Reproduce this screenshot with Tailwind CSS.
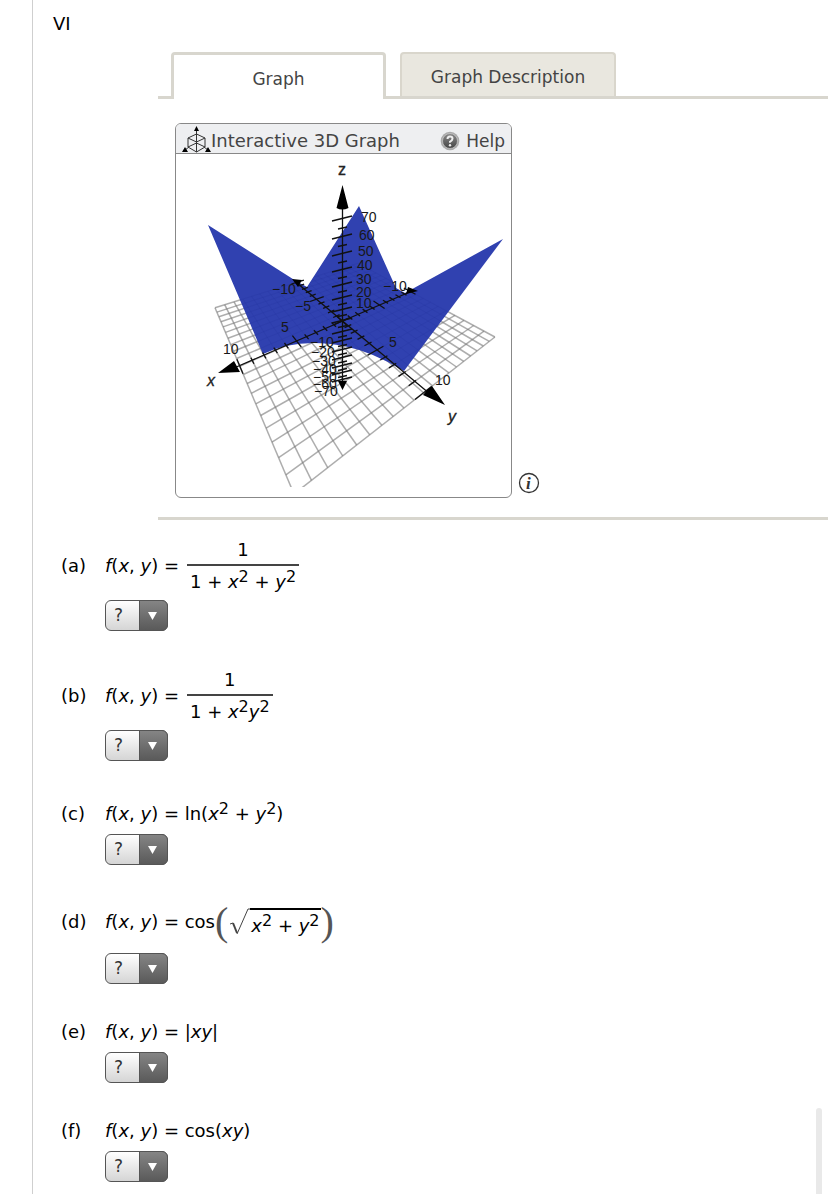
<!DOCTYPE html>
<html lang="en">
<head>
  <meta charset="UTF-8" />
  <meta name="viewport" content="width=device-width, initial-scale=1.0" />
  <title>Match the function with its graph</title>
  <script src="https://cdn.jsdelivr.net/npm/@tailwindcss/browser@4"></script>
</head>
<body class="bg-white font-['DejaVu_Sans',sans-serif] text-lg text-black overflow-x-hidden">

  <main class="ml-8 min-h-screen border-l border-[#cfcfcf] pt-3 pb-3">
    <h2 class="pl-5 h-6 leading-6">VI</h2>

    <!-- Graph tabs -->
    <section class="ml-[125px] mt-4 border-b-3 border-[#d8d6ce] pb-[19px]">
      <div role="tablist" class="flex items-end gap-3.5 border-b-3 border-[#d8d6ce] pl-[13px] text-[17px] text-[#444]">
        <button role="tab" aria-selected="true" class="-mb-[3px] h-[47px] w-[215px] rounded-t border-3 border-b-0 border-[#d8d6ce] bg-white pt-1">Graph</button>
        <button role="tab" aria-selected="false" class="h-11 w-[216px] rounded-t border-2 border-b-0 border-[#d9d6cc] bg-[#e9e7df] pt-1">Graph Description</button>
      </div>

      <div class="mt-6 ml-[17px] flex items-end gap-1.5">
        <div class="w-[337px] overflow-hidden rounded-md border border-[#888]">
          <div class="flex h-[30px] items-end justify-between border-b border-[#888] bg-[#eeeff1] pl-1.5 pr-1.5 text-[17px] text-[#444]">
            <div class="flex items-end">
              <svg class="h-7 w-[29px]" viewBox="0 0 29 28" fill="none" stroke="#333" stroke-width="1">
                <path d="M14.500 6v6M14.500 21v6M7 22l-4 3M22 22l4 3" />
                <path d="M6 13l8.500-4 8.500 4v9l-8.500 5L6 22zM6 13l8.500 4 8.500-4M14.500 17v10M14.500 9v9l-8.500 4M14.500 18l8.500 4" />
                <path d="M14.500 1l2.500 5h-5zM0 27l3-5 3 5zM23 27l3-5 3 5z" fill="#000" stroke="none" />
              </svg>
              <span class="text-lg leading-6">Interactive 3D Graph</span>
            </div>
            <button class="flex items-center gap-1.5 leading-6">
              <svg class="h-5 w-5" viewBox="0 0 20 20">
                <defs>
                  <linearGradient id="ball" x1="0" y1="0" x2="0" y2="1">
                    <stop offset="0" stop-color="#8a8a8a" /><stop offset="1" stop-color="#444" />
                  </linearGradient>
                </defs>
                <circle cx="10" cy="10" r="9.300" fill="#aaa" />
                <circle cx="10" cy="10" r="7.500" fill="url(#ball)" stroke="#ccc" stroke-width=".7" />
                <path d="M7.500 8q0-2.500 2.500-2.500t2.500 2.300q0 1.500-2.500 3v.9" fill="none" stroke="#eee" stroke-width="2" />
                <circle cx="10" cy="14.200" r="1.200" fill="#eee" />
              </svg>
              Help
            </button>
          </div>

          <!-- 3D plot -->
          <svg class="block h-[343px] w-full" viewBox="176 154 335 343" role="img" aria-label="Graph of the surface z = xy">
            <defs>
              <clipPath id="frame"><rect x="176" y="299" width="335" height="188" /></clipPath>
              <clipPath id="sheet">
                <path d="M208 225L296 281L307 287L359 206L396 288L405 293L503 239L404 371Q373 352 344 346Q298 337 263 354Z" />
              </clipPath>
            </defs>
            <g id="floor" clip-path="url(#frame)" fill="none" stroke="#777" stroke-opacity=".6" stroke-width="1.500"></g>
            <g clip-path="url(#sheet)">
              <rect x="200" y="200" width="310" height="180" fill="#3041b0" />
              <g id="mesh" fill="none" stroke="#24339a" stroke-opacity=".2" stroke-width="1"></g>
            </g>
            <g stroke="#111" stroke-width="1.300" fill="none">
              <path d="M234 368L412 291M297 283L430 394M342.500 205V385" />
              <g id="ticks"></g>
            </g>
            <path d="M342.500 185L348.500 208Q342 211 336.500 208ZM218 373L234 361L240 372ZM445 405L432 386Q426 390 423 395ZM342.500 390L338 381H347ZM418 291L408 287L406 294ZM292 279L302 280L298 287Z" fill="#000" />
            <g class="font-['Liberation_Sans',sans-serif] text-[14px]" fill="#181818" id="numbers">
              <text x="223" y="354">10</text>
              <text x="281" y="332">5</text>
              <text x="389" y="347">5</text>
              <text x="435" y="385">10</text>
              <text x="272" y="294">−10</text>
              <text x="295" y="311">−5</text>
              <text x="383" y="291">−10</text>
            </g>
            <g class="font-['Liberation_Sans',sans-serif] text-base" fill="#222" stroke="#222" stroke-width=".3">
              <text x="338" y="175">z</text>
              <text class="italic" x="207" y="386">x</text>
              <text class="italic" x="448" y="422">y</text>
            </g>
          </svg>
        </div>
        <button aria-label="Information" class="mb-1">
          <svg class="h-[22px] w-[22px]" viewBox="0 0 22 22">
            <circle cx="11" cy="11" r="9.500" fill="#fff" stroke="#333" stroke-width="1.300" />
            <text class="font-['Liberation_Serif',serif] text-[17px] font-bold italic" x="8" y="17" fill="#333">i</text>
          </svg>
        </button>
      </div>
    </section>

    <!-- Questions -->
    <ol class="ml-7 mt-[18px]">
      <li class="grid grid-cols-[44px_1fr]">
        <label for="qa" class="flex h-14 items-center">(a)</label>
        <div class="flex h-14 items-center gap-2">
          <span><i>f</i>(<i>x</i>, <i>y</i>) =</span>
          <span class="flex flex-col items-center">
            <span class="h-6 leading-5">1</span>
            <span class="h-7 border-t-2 border-[#444] px-[3px] leading-8">1 + <i>x</i><sup class="-top-1.5 text-base leading-none">2</sup> + <i>y</i><sup class="-top-1.5 text-base leading-none">2</sup></span>
          </span>
        </div>
        <div class="relative col-start-2 mt-1.5 h-[31px] w-[63px] text-[17px]">
          <select id="qa" class="h-full w-full appearance-none rounded-md border border-[#555] bg-linear-to-b from-white to-[#d5d5d5] pl-2 text-[#333]">
            <option>?</option><option>I</option><option>II</option><option>III</option><option>IV</option><option>V</option><option>VI</option>
          </select>
          <span class="pointer-events-none absolute inset-y-0 right-0 flex w-[29px] items-center justify-center rounded-r-md border border-[#555] bg-linear-to-b from-[#858585] to-[#5a5a5a] pr-0.5">
            <svg class="h-2 w-2.5" viewBox="0 0 10 8"><path d="M0 0h9L4.500 8z" fill="#fff" /></svg>
          </span>
        </div>
      </li>

      <li class="mt-[37px] grid grid-cols-[44px_1fr]">
        <label for="qb" class="flex h-14 items-center">(b)</label>
        <div class="flex h-14 items-center gap-2">
          <span><i>f</i>(<i>x</i>, <i>y</i>) =</span>
          <span class="flex flex-col items-center">
            <span class="h-6 leading-5">1</span>
            <span class="h-7 border-t-2 border-[#444] px-[3px] leading-8">1 + <i>x</i><sup class="-top-1.5 text-base leading-none">2</sup><i>y</i><sup class="-top-1.5 text-base leading-none">2</sup></span>
          </span>
        </div>
        <div class="relative col-start-2 mt-1.5 h-[31px] w-[63px] text-[17px]">
          <select id="qb" class="h-full w-full appearance-none rounded-md border border-[#555] bg-linear-to-b from-white to-[#d5d5d5] pl-2 text-[#333]">
            <option>?</option><option>I</option><option>II</option><option>III</option><option>IV</option><option>V</option><option>VI</option>
          </select>
          <span class="pointer-events-none absolute inset-y-0 right-0 flex w-[29px] items-center justify-center rounded-r-md border border-[#555] bg-linear-to-b from-[#858585] to-[#5a5a5a] pr-0.5">
            <svg class="h-2 w-2.5" viewBox="0 0 10 8"><path d="M0 0h9L4.500 8z" fill="#fff" /></svg>
          </span>
        </div>
      </li>

      <li class="mt-[39px] grid grid-cols-[44px_1fr]">
        <label for="qc" class="flex h-7 items-center">(c)</label>
        <div class="h-7 leading-7"><i>f</i>(<i>x</i>, <i>y</i>) = ln(<i>x</i><sup class="-top-1.5 text-base leading-none">2</sup> + <i>y</i><sup class="-top-1.5 text-base leading-none">2</sup>)</div>
        <div class="relative col-start-2 mt-1.5 h-[31px] w-[63px] text-[17px]">
          <select id="qc" class="h-full w-full appearance-none rounded-md border border-[#555] bg-linear-to-b from-white to-[#d5d5d5] pl-2 text-[#333]">
            <option>?</option><option>I</option><option>II</option><option>III</option><option>IV</option><option>V</option><option>VI</option>
          </select>
          <span class="pointer-events-none absolute inset-y-0 right-0 flex w-[29px] items-center justify-center rounded-r-md border border-[#555] bg-linear-to-b from-[#858585] to-[#5a5a5a] pr-0.5">
            <svg class="h-2 w-2.5" viewBox="0 0 10 8"><path d="M0 0h9L4.500 8z" fill="#fff" /></svg>
          </span>
        </div>
      </li>

      <li class="mt-8 grid grid-cols-[44px_1fr]">
        <label for="qd" class="flex h-[50px] items-center">(d)</label>
        <div class="flex h-[50px] items-center">
          <span><i>f</i>(<i>x</i>, <i>y</i>) = cos</span>
          <span class="font-['Liberation_Serif',serif] text-[40px] leading-10 text-[#555]">(</span>
          <svg class="h-7 w-[22px]" viewBox="0 0 22 28" fill="none" stroke="#444"><path d="M2 16l3-1" /><path d="M5 15l4 10" stroke-width="2" /><path d="M9 26L20 1h2" /></svg>
          <span class="h-7 border-t-2 border-black px-px leading-8"><i>x</i><sup class="-top-1.5 text-base leading-none">2</sup> + <i>y</i><sup class="-top-1.5 text-base leading-none">2</sup></span>
          <span class="font-['Liberation_Serif',serif] text-[40px] leading-10 text-[#555]">)</span>
        </div>
        <div class="relative col-start-2 mt-1.5 h-[31px] w-[63px] text-[17px]">
          <select id="qd" class="h-full w-full appearance-none rounded-md border border-[#555] bg-linear-to-b from-white to-[#d5d5d5] pl-2 text-[#333]">
            <option>?</option><option>I</option><option>II</option><option>III</option><option>IV</option><option>V</option><option>VI</option>
          </select>
          <span class="pointer-events-none absolute inset-y-0 right-0 flex w-[29px] items-center justify-center rounded-r-md border border-[#555] bg-linear-to-b from-[#858585] to-[#5a5a5a] pr-0.5">
            <svg class="h-2 w-2.5" viewBox="0 0 10 8"><path d="M0 0h9L4.500 8z" fill="#fff" /></svg>
          </span>
        </div>
      </li>

      <li class="mt-[34px] grid grid-cols-[44px_1fr]">
        <label for="qe" class="flex h-7 items-center">(e)</label>
        <div class="h-7 leading-7"><i>f</i>(<i>x</i>, <i>y</i>) = |<i>xy</i>|</div>
        <div class="relative col-start-2 mt-1.5 h-[31px] w-[63px] text-[17px]">
          <select id="qe" class="h-full w-full appearance-none rounded-md border border-[#555] bg-linear-to-b from-white to-[#d5d5d5] pl-2 text-[#333]">
            <option>?</option><option>I</option><option>II</option><option>III</option><option>IV</option><option>V</option><option>VI</option>
          </select>
          <span class="pointer-events-none absolute inset-y-0 right-0 flex w-[29px] items-center justify-center rounded-r-md border border-[#555] bg-linear-to-b from-[#858585] to-[#5a5a5a] pr-0.5">
            <svg class="h-2 w-2.5" viewBox="0 0 10 8"><path d="M0 0h9L4.500 8z" fill="#fff" /></svg>
          </span>
        </div>
      </li>

      <li class="mt-[34px] grid grid-cols-[44px_1fr]">
        <label for="qf" class="flex h-7 items-center">(f)</label>
        <div class="h-7 leading-7"><i>f</i>(<i>x</i>, <i>y</i>) = cos(<i>xy</i>)</div>
        <div class="relative col-start-2 mt-1.5 h-[31px] w-[63px] text-[17px]">
          <select id="qf" class="h-full w-full appearance-none rounded-md border border-[#555] bg-linear-to-b from-white to-[#d5d5d5] pl-2 text-[#333]">
            <option>?</option><option>I</option><option>II</option><option>III</option><option>IV</option><option>V</option><option>VI</option>
          </select>
          <span class="pointer-events-none absolute inset-y-0 right-0 flex w-[29px] items-center justify-center rounded-r-md border border-[#555] bg-linear-to-b from-[#858585] to-[#5a5a5a] pr-0.5">
            <svg class="h-2 w-2.5" viewBox="0 0 10 8"><path d="M0 0h9L4.500 8z" fill="#fff" /></svg>
          </span>
        </div>
      </li>
    </ol>
  </main>

  <!-- Scroll thumb -->
  <div class="fixed bottom-0 right-1.5 h-[86px] w-1.5 rounded-t-full bg-[#e9e9e9]"></div>

  <script>
    // floor point (x, y) -> screen, simple perspective
    function project(x, y) {
      const w = 1 - 0.02036 * x - 0.02964 * y;
      return [(342 - 15.1 * x - 4.4 * y) / w, (321 - 2.935 * x - 4.465 * y) / w];
    }

    function path(parent, points) {
      const el = document.createElementNS("http://www.w3.org/2000/svg", "path");
      el.setAttribute("d", "M" + points.map(p => p.map(n => n.toFixed(1)).join(" ")).join("L"));
      document.getElementById(parent).appendChild(el);
    }

    for (let i = -10; i <= 10; i++) {
      for (const layer of ["floor", "mesh"]) {
        path(layer, [project(i, -10), project(i, 10)]);
        path(layer, [project(-10, i), project(10, i)]);
      }
      // every fifth tick is longer
      const t = i % 5 === 0 ? 0.9 : 0.4;
      path("ticks", [project(i, -t), project(i, t)]);
      path("ticks", [project(-t, i), project(t, i)]);
    }

    // z axis, -70 to 70 by 5
    const zTicks = [219, 237, 254, 270, 285, 298, 310, 321, 332, 341, 350, 358, 366, 373, 380];
    zTicks.forEach((y, i) => {
      path("ticks", [[332, y + 2], [352, y - 3]]);
      if (i < 14) {
        const mid = (y + zTicks[i + 1]) / 2;
        path("ticks", [[338, mid + 1], [347, mid - 1]]);
      }
    });

    function label(x, y, s) {
      const el = document.createElementNS("http://www.w3.org/2000/svg", "text");
      el.setAttribute("x", x);
      el.setAttribute("y", y);
      el.textContent = s;
      document.getElementById("numbers").appendChild(el);
    }
    [[361, 222, "70"], [359, 240, "60"], [358, 256, "50"], [357, 270, "40"], [356, 284, "30"], [356, 297, "20"], [356, 308, "10"],
     [310, 347, "−10"], [311, 357, "−20"], [312, 366, "−30"], [313, 374, "−40"], [313, 382, "−50"], [313, 389, "−60"], [314, 396, "−70"]]
      .forEach(l => label(...l));
  </script>
</body>
</html>
